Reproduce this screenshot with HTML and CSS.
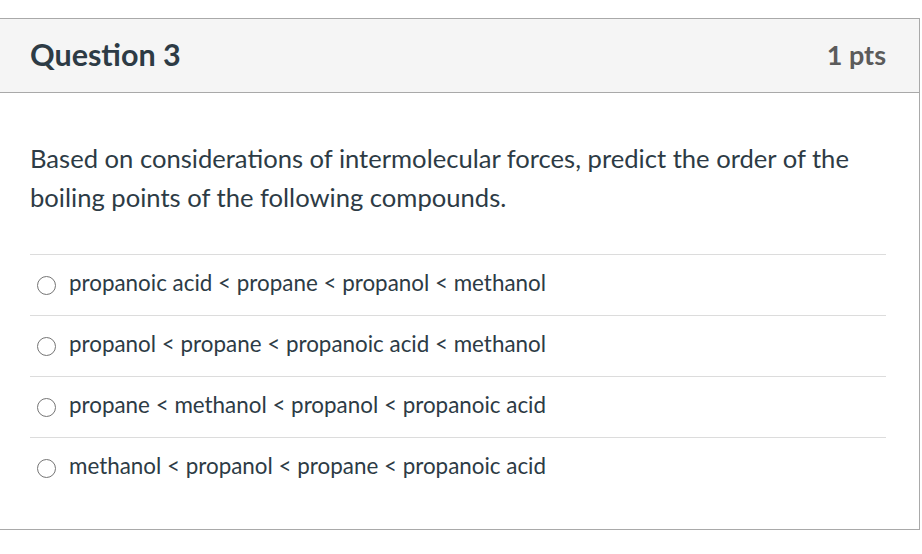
FILE: index.html
```html
<!DOCTYPE html>
<html>
<head>
<meta charset="utf-8">
<link rel="stylesheet" href="styles.css">
</head>
<body>
<div class="question">
  <div class="q-header">
    <span class="q-name">Question 3</span>
    <span class="q-points">1 pts</span>
  </div>
  <div class="q-body">
    <p class="q-text">Based on considerations of intermolecular forces, predict the order of the boiling points of the following compounds.</p>
    <div class="answers">
      <label class="answer"><span class="radio"></span><span class="answer-text">propanoic acid &lt; propane &lt; propanol &lt; methanol</span></label>
      <label class="answer"><span class="radio"></span><span class="answer-text">propanol &lt; propane &lt; propanoic acid &lt; methanol</span></label>
      <label class="answer"><span class="radio"></span><span class="answer-text">propane &lt; methanol &lt; propanol &lt; propanoic acid</span></label>
      <label class="answer"><span class="radio"></span><span class="answer-text">methanol &lt; propanol &lt; propane &lt; propanoic acid</span></label>
    </div>
  </div>
</div>
</body>
</html>
```
FILE: styles.css
```css
html, body {
  margin: 0;
  padding: 0;
  background: #ffffff;
}
body {
  font-family: Lato, "Open Sans", "Liberation Sans", sans-serif;
  color: #2d3b45;
}
.question {
  margin-top: 18px;
  width: 919px;
  border: 1px solid #a9a9a9;
  border-left: 0;
}
.q-header {
  height: 73px;
  background: #f5f5f5;
  border-bottom: 1px solid #a9a9a9;
  display: flex;
  justify-content: space-between;
  align-items: center;
  padding: 0 33px 0 30px;
}
.q-name {
  font-weight: 700;
  font-size: 30.5px;
  color: #2d3b45;
  margin-top: -3px;
}
.q-points {
  font-weight: 700;
  font-size: 27px;
  color: #5b5b5b;
  margin-top: -3px;
}
.q-body {
  padding: 46px 33px 31px 30px;
}
.q-text {
  margin: 0 0 37px 0;
  font-size: 25.6px;
  line-height: 39px;
}
.answers {
  display: flex;
  flex-direction: column;
}
.answer {
  display: flex;
  align-items: center;
  gap: 13px;
  height: 60px;
  border-top: 1px solid #dcdcdc;
  padding-left: 7px;
  font-size: 22.4px;
}
.radio {
  width: 19px;
  height: 19px;
  border: 1.5px solid #757575;
  border-radius: 50%;
  box-sizing: border-box;
  flex: none;
}
.answer-text {
  line-height: 1;
  margin-top: -3px;
}
```
